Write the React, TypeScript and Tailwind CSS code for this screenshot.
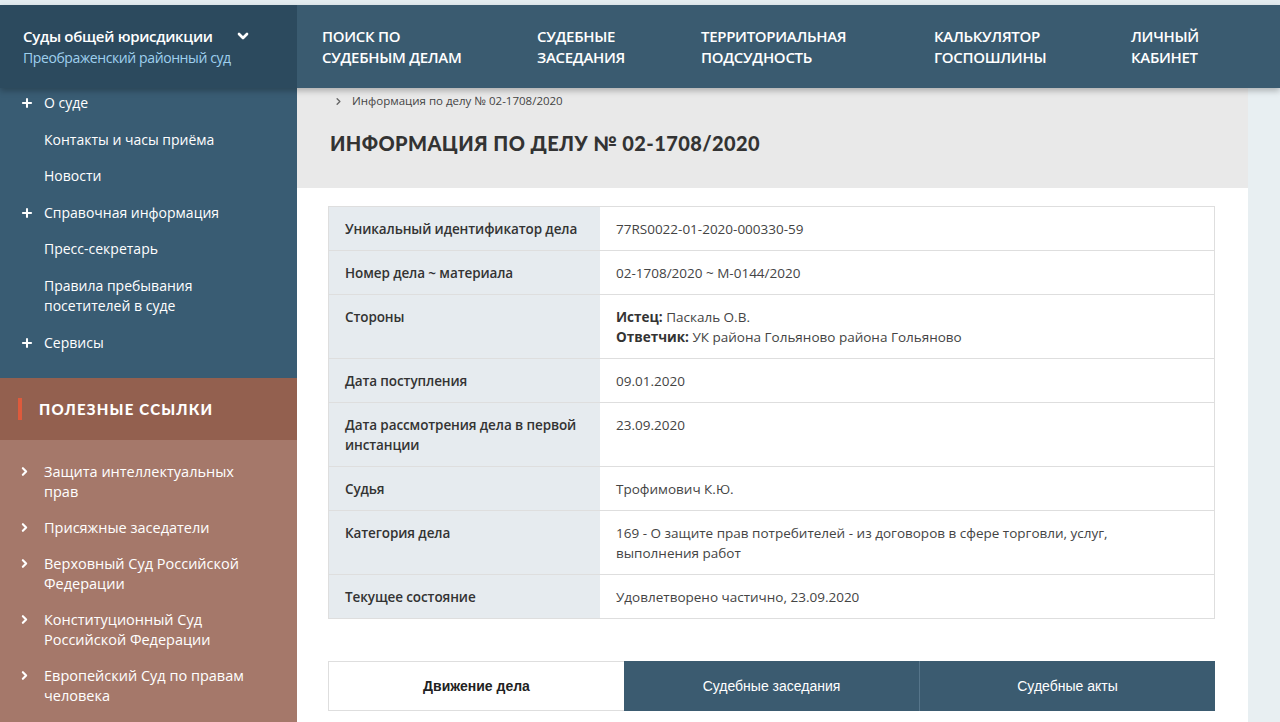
import { ChevronDown, ChevronRight, Plus } from "lucide-react";

const navItems = [
  { top: "ПОИСК ПО", bottom: "СУДЕБНЫМ ДЕЛАМ", w: "w-[215px]" },
  { top: "СУДЕБНЫЕ", bottom: "ЗАСЕДАНИЯ", w: "w-[164px]" },
  { top: "ТЕРРИТОРИАЛЬНАЯ", bottom: "ПОДСУДНОСТЬ", w: "w-[233px]" },
  { top: "КАЛЬКУЛЯТОР", bottom: "ГОСПОШЛИНЫ", w: "w-[197px]" },
  { top: "ЛИЧНЫЙ", bottom: "КАБИНЕТ", w: "w-[120px]" },
];

const menu: { label: string; plus?: boolean }[] = [
  { label: "О суде", plus: true },
  { label: "Контакты и часы приёма" },
  { label: "Новости" },
  { label: "Справочная информация", plus: true },
  { label: "Пресс-секретарь" },
  { label: "Правила пребывания посетителей в суде" },
  { label: "Сервисы", plus: true },
];

const links = [
  "Защита интеллектуальных прав",
  "Присяжные заседатели",
  "Верховный Суд Российской Федерации",
  "Конституционный Суд Российской Федерации",
  "Европейский Суд по правам человека",
];

const rows: { label: string; value: React.ReactNode }[] = [
  { label: "Уникальный идентификатор дела", value: "77RS0022-01-2020-000330-59" },
  { label: "Номер дела ~ материала", value: "02-1708/2020 ~ М-0144/2020" },
  {
    label: "Стороны",
    value: (
      <>
        <div>
          <b className="font-bold text-[#333]">Истец:</b> Паскаль О.В.
        </div>
        <div>
          <b className="font-bold text-[#333]">Ответчик:</b> УК района Гольяново района Гольяново
        </div>
      </>
    ),
  },
  { label: "Дата поступления", value: "09.01.2020" },
  { label: "Дата рассмотрения дела в первой инстанции", value: "23.09.2020" },
  { label: "Судья", value: "Трофимович К.Ю." },
  {
    label: "Категория дела",
    value: "169 - О защите прав потребителей - из договоров в сфере торговли, услуг, выполнения работ",
  },
  { label: "Текущее состояние", value: "Удовлетворено частично, 23.09.2020" },
];

function App() {
  return (
    <div className="h-[722px] overflow-hidden bg-white font-['Open_Sans',sans-serif]">
      <div className="h-[5px] bg-[#e3ecf0]" />
      <header className="relative z-10 flex h-[83px] shadow-[0_3px_6px_rgba(0,0,0,0.25)]">
        <div className="flex w-[297px] shrink-0 flex-col justify-center bg-[#2c4a5e] pl-[23px] pt-[1px]">
          <div className="flex items-center text-[15px] font-semibold tracking-[-0.3px] text-white leading-[22px]">
            <span className="w-[212px]">Суды общей юрисдикции</span>
            <ChevronDown size={16} strokeWidth={4} />
          </div>
          <div className="text-[14px] tracking-[-0.4px] leading-[22px] text-[#9fd0ee]">
            Преображенский районный суд
          </div>
        </div>
        <nav className="flex flex-1 items-center bg-[#3a5b70] pl-[25px] pt-[1px]">
          {navItems.map((n) => (
            <div
              key={n.top}
              className={`${n.w} text-[15px] font-semibold leading-[21px] tracking-[-0.3px] text-white`}
            >
              <div>{n.top}</div>
              <div>{n.bottom}</div>
            </div>
          ))}
        </nav>
      </header>

      <div className="flex">
        <aside className="w-[297px] shrink-0">
          <div className="flex h-[290px] flex-col gap-4 bg-[#395c73] pt-[5px] text-[14px] leading-[20.5px] text-white">
            {menu.map((m) => (
              <div key={m.label} className="flex">
                <span className="flex w-[44px] shrink-0 justify-start pl-[20px] pt-[3px]">
                  {m.plus && <Plus size={14} strokeWidth={3.5} />}
                </span>
                <span className="w-[180px]">{m.label}</span>
              </div>
            ))}
          </div>
          <div className="flex h-[62px] items-center bg-[#93604f] pl-[18px]">
            <span className="mr-[17px] h-[22px] w-[4px] bg-[#dd5a3c]" />
            <span className="font-['Lato',sans-serif] text-[15px] font-black tracking-[1.2px] text-white">
              ПОЛЕЗНЫЕ ССЫЛКИ
            </span>
          </div>
          <div className="flex h-[400px] flex-col gap-4 bg-[#a5786a] pt-[22px] text-[14.5px] leading-[20px] text-white">
            {links.map((l) => (
              <div key={l} className="flex">
                <span className="flex w-[44px] shrink-0 pl-[18px] pt-[3px]">
                  <ChevronRight size={13} strokeWidth={4} />
                </span>
                <span className="w-[210px]">{l}</span>
              </div>
            ))}
          </div>
        </aside>

        <main className="flex flex-1">
          <div className="w-[951px]">
            <div className="h-[100px] bg-[#e9e9e9] pl-[36px]">
              <div className="flex items-center gap-[8px] pt-[5px] text-[11.5px] leading-[16px] text-[#444]">
                <ChevronRight size={11} strokeWidth={3} className="text-[#666]" />
                <span>Информация по делу № 02-1708/2020</span>
              </div>
              <h1 className="-ml-[3px] mt-[21px] font-['Lato',sans-serif] text-[20px] font-black leading-[26px] tracking-[0.4px] text-[#333]">
                ИНФОРМАЦИЯ ПО ДЕЛУ № 02-1708/2020
              </h1>
            </div>

            <div className="px-[31px] pt-[18px]">
              <div className="w-[887px] border border-[#dedede] text-[13.5px] leading-[20px]">
                {rows.map((r, i) => (
                  <div key={i} className={`flex ${i > 0 ? "border-t border-[#dedede]" : ""}`}>
                    <div className="w-[271px] shrink-0 bg-[#e6ebef] py-[11.5px] pl-4 pr-2 font-semibold tracking-[-0.1px] text-[#333]">
                      {r.label}
                    </div>
                    <div className="flex-1 py-[11.5px] pl-4 pr-[90px] text-[#444]">{r.value}</div>
                  </div>
                ))}
              </div>

              <div className="mt-[42px] flex h-[50px] w-[887px] font-['Liberation_Sans',sans-serif] text-[14px]">
                <div className="flex w-[296px] items-center justify-center border border-[#dedede] border-r-0 font-bold text-[#222]">
                  Движение дела
                </div>
                <div className="flex w-[296px] items-center justify-center border-r border-[#56758a] bg-[#3b5b70] text-white">
                  Судебные заседания
                </div>
                <div className="flex flex-1 items-center justify-center bg-[#3b5b70] text-white">
                  Судебные акты
                </div>
              </div>
            </div>
          </div>
          <div className="flex-1 bg-[#e8eff2]" />
        </main>
      </div>
    </div>
  );
}

export default App;
